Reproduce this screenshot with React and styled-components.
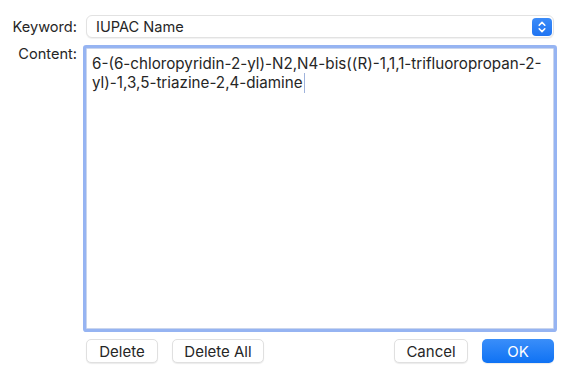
import React from "react";
import styled, { createGlobalStyle } from "styled-components";

const Global = createGlobalStyle`
  html, body { margin: 0; padding: 0; background: #ffffff; }
  body { font-family: Inter, "Helvetica Neue", Arial, sans-serif; color: #262626; }
  * { box-sizing: border-box; }
`;

const Dialog = styled.div`
  width: 568px;
  height: 378px;
  padding: 15px 14px 0 0;
  display: grid;
  grid-template-columns: 77px 1fr;
  grid-template-rows: 23px 281px 24px;
  column-gap: 9px;
  row-gap: 10px;
`;

const Label = styled.div`
  font-size: 14.6px;
  line-height: 17px;
  color: #262626;
  text-align: right;
  align-self: ${(p) => (p.$top ? "start" : "center")};
  margin-top: ${(p) => (p.$top ? "-2px" : "1px")};
`;

const Select = styled.div`
  position: relative;
  display: flex;
  align-items: center;
  height: 23px;
  border: 1px solid #e2e2e2;
  border-radius: 6px;
  background: #fff;
  box-shadow: 0 1px 1px rgba(0, 0, 0, 0.06);
  padding-left: 9px;
  font-size: 14.6px;
  color: #262626;
`;

const Stepper = styled.div`
  position: absolute;
  right: 1px;
  top: 1.5px;
  width: 20px;
  height: 18px;
  border-radius: 4px;
  background: linear-gradient(#3b8bf8, #1f74f2);
  display: flex;
  align-items: center;
  justify-content: center;
`;

const Field = styled.div`
  border: 1px solid #c9d5ee;
  background: #fff;
  box-shadow: 0 0 0 3px #96b4f2;
  border-radius: 1px;
  padding: 5px 5px;
  font-size: 15.2px;
  line-height: 19px;
  color: #262626;
`;

const Line = styled.div`
  white-space: nowrap;
`;

const Caret = styled.span`
  display: inline-block;
  width: 1px;
  height: 20px;
  background: #9fb3dc;
  vertical-align: -5px;
  margin-left: 1px;
`;

const ButtonRow = styled.div`
  grid-column: 2;
  display: flex;
  align-items: center;
  gap: 14px;
`;

const Spacer = styled.div`
  flex: 1;
`;

const Button = styled.button`
  height: 24px;
  width: ${(p) => p.$w}px;
  border-radius: 5px;
  font-family: inherit;
  font-size: 15px;
  padding: 0;
  cursor: default;
  border: ${(p) => (p.$primary ? "none" : "1px solid #e0e0e0")};
  background: ${(p) => (p.$primary ? "linear-gradient(#3a8ef9, #0f72f4)" : "#ffffff")};
  color: ${(p) => (p.$primary ? "#ffffff" : "#262626")};
  box-shadow: 0 1px 1px rgba(0, 0, 0, 0.08);
`;

const Empty = styled.div``;

export default function App() {
  return (
    <>
      <Global />
      <Dialog>
        <Label>Keyword:</Label>
        <Select>
          IUPAC Name
          <Stepper>
            <svg width="10" height="14" viewBox="0 0 10 14" fill="none">
              <path d="M2.2 5.2 L5 2.4 L7.8 5.2" stroke="#fff" strokeWidth="1.6" strokeLinecap="round" strokeLinejoin="round" />
              <path d="M2.2 8.8 L5 11.6 L7.8 8.8" stroke="#fff" strokeWidth="1.6" strokeLinecap="round" strokeLinejoin="round" />
            </svg>
          </Stepper>
        </Select>
        <Label $top>Content:</Label>
        <Field>
          <Line>6-(6-chloropyridin-2-yl)-N2,N4-bis((R)-1,1,1-trifluoropropan-2-</Line>
          <Line>
            yl)-1,3,5-triazine-2,4-diamine
            <Caret />
          </Line>
        </Field>
        <Empty />
        <ButtonRow>
          <Button $w={72}>Delete</Button>
          <Button $w={92}>Delete All</Button>
          <Spacer />
          <Button $w={74}>Cancel</Button>
          <Button $w={72} $primary>OK</Button>
        </ButtonRow>
      </Dialog>
    </>
  );
}
